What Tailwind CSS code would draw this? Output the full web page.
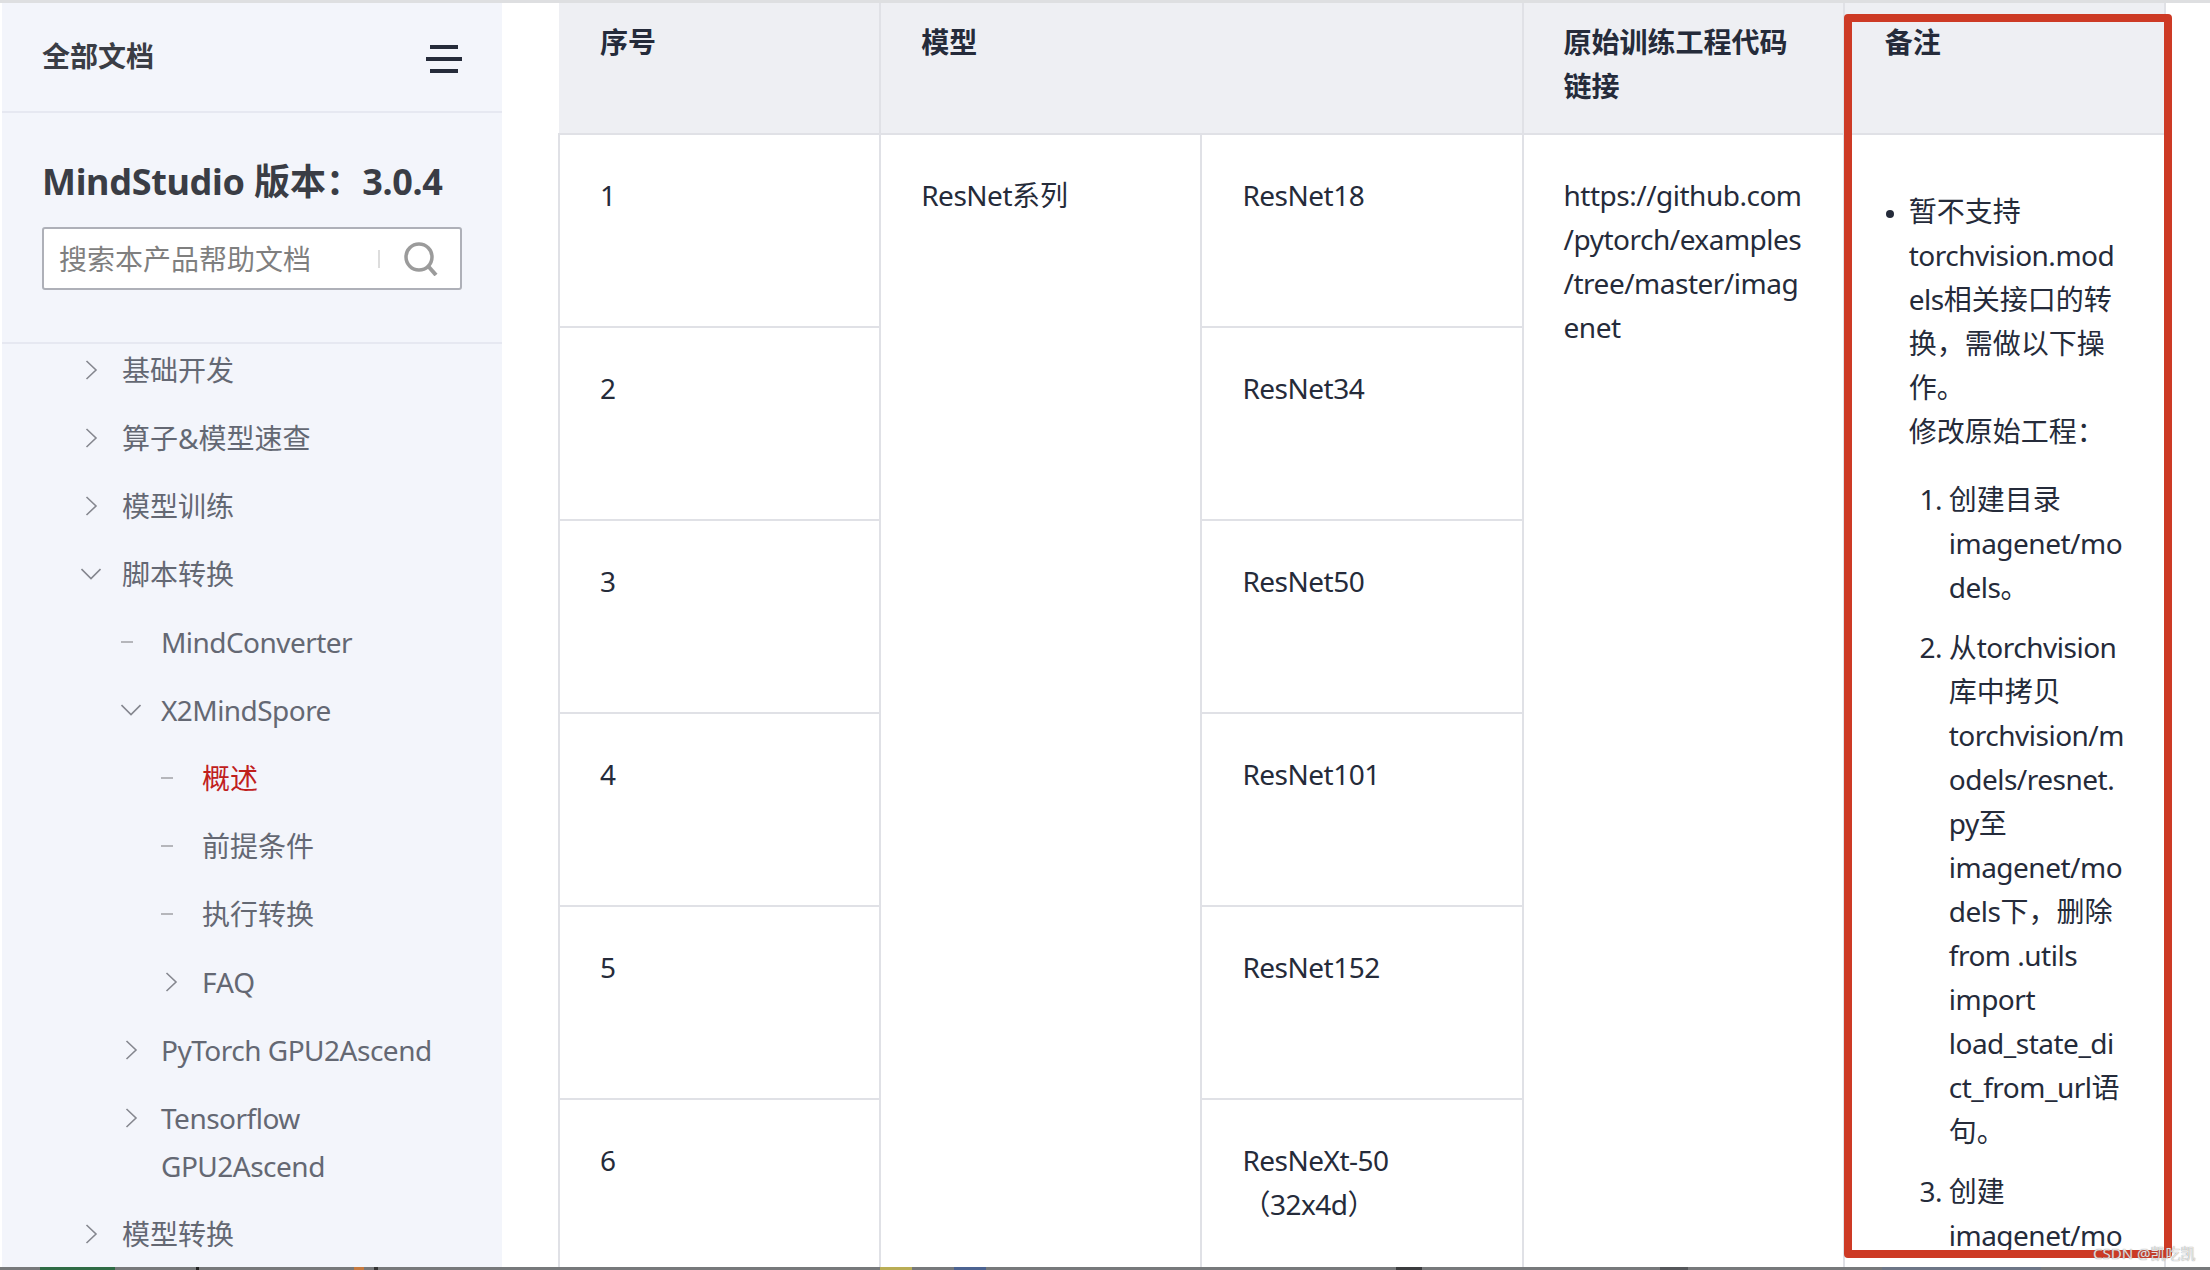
<!DOCTYPE html>
<html lang="zh-CN">
<head>
    <meta charset="UTF-8">
    <title>MindStudio 版本：3.0.4</title>
    <script src="https://cdn.jsdelivr.net/npm/@tailwindcss/browser@4"></script>
</head>
<body class="bg-white [font-family:'Noto_Sans','Noto_Sans_CJK_SC',sans-serif] text-[28px] leading-[44px] text-[#252b3a]">
    <svg class="hidden">
        <symbol id="chev-right" viewBox="0 0 20 20"><path d="M5.5 1 L15 10 L5.5 19" fill="none" stroke="#85878f" stroke-width="1.6"/></symbol>
        <symbol id="chev-down" viewBox="0 0 20 20"><path d="M0.5 5 L10 14.5 L19.5 5" fill="none" stroke="#85878f" stroke-width="1.6"/></symbol>
    </svg>

    <div class="relative flex h-[1270px] w-[2210px] flex-col overflow-hidden">
        <div class="h-[3px] shrink-0 bg-[#dedfe1]"></div>

        <div class="flex min-h-0 flex-1">
            <!-- sidebar -->
            <aside class="ml-[2px] w-[500px] shrink-0 bg-[#f3f5fb]">
                <div class="flex h-[110px] items-center justify-between border-b-2 border-[#e6e8f1] pr-[40px] pl-[40px]">
                    <span class="-mt-[2px] font-bold text-[#3a3d45]">全部文档</span>
                    <svg class="mt-[4px]" width="36" height="28" viewBox="0 0 36 28" fill="#252b3a"><rect x="4" y="0" width="28" height="4"/><rect x="0" y="12" width="36" height="4"/><rect x="4" y="24" width="28" height="4"/></svg>
                </div>
                <div class="h-[231px] border-b-2 border-[#e6e8f1] px-[40px] pt-[47px]">
                    <div class="text-[36px] leading-[44px] font-bold text-[#3a3d45]"><span class="tracking-[-0.3px]">MindStudio</span> 版本：<span class="tracking-[-0.3px]">3.0.4</span></div>
                    <div class="mt-[23px] flex h-[63px] w-[420px] items-center rounded-[3px] border-2 border-[#aeb0b8] bg-white pl-[15px]">
                        <span class="w-[319px] text-[#7f7f7f]">搜索本产品帮助文档</span>
                        <span class="h-[18px] w-[2px] bg-[#dddddd]"></span>
                        <svg class="ml-[24px]" width="34" height="34" viewBox="0 0 34 34" fill="none" stroke="#9b9b9b"><circle cx="15" cy="15" r="13" stroke-width="3.5"/><path d="M24 24 L32 33" stroke-width="4"/></svg>
                    </div>
                </div>
                <nav class="flex flex-col gap-[20px] pt-[2px] leading-[48px] text-[#646873]">
                    <div class="flex pl-[79px]"><span class="flex h-[48px] w-[41px] shrink-0 items-center"><svg width="20" height="20"><use href="#chev-right"/></svg></span>基础开发</div>
                    <div class="flex pl-[79px]"><span class="flex h-[48px] w-[41px] shrink-0 items-center"><svg width="20" height="20"><use href="#chev-right"/></svg></span>算子&amp;模型速查</div>
                    <div class="flex pl-[79px]"><span class="flex h-[48px] w-[41px] shrink-0 items-center"><svg width="20" height="20"><use href="#chev-right"/></svg></span>模型训练</div>
                    <div class="flex pl-[79px]"><span class="flex h-[48px] w-[41px] shrink-0 items-center"><svg width="20" height="20"><use href="#chev-down"/></svg></span>脚本转换</div>
                    <div class="flex pl-[119px] tracking-[-0.55px]"><span class="flex h-[48px] w-10 shrink-0 items-center"><span class="h-[2px] w-[12px] bg-[#b5b6bb]"></span></span>MindConverter</div>
                    <div class="flex pl-[119px] tracking-[-0.55px]"><span class="flex h-[48px] w-10 shrink-0 items-center"><svg width="20" height="20"><use href="#chev-down"/></svg></span>X2MindSpore</div>
                    <div class="flex pl-[159px]"><span class="flex h-[48px] w-[41px] shrink-0 items-center"><span class="h-[2px] w-[12px] bg-[#b5b6bb]"></span></span><span class="text-[#c0201c]">概述</span></div>
                    <div class="flex pl-[159px]"><span class="flex h-[48px] w-[41px] shrink-0 items-center"><span class="h-[2px] w-[12px] bg-[#b5b6bb]"></span></span>前提条件</div>
                    <div class="flex pl-[159px]"><span class="flex h-[48px] w-[41px] shrink-0 items-center"><span class="h-[2px] w-[12px] bg-[#b5b6bb]"></span></span>执行转换</div>
                    <div class="flex pl-[159px]"><span class="flex h-[48px] w-[41px] shrink-0 items-center"><svg width="20" height="20"><use href="#chev-right"/></svg></span>FAQ</div>
                    <div class="flex pl-[119px] tracking-[-0.5px]"><span class="flex h-[48px] w-10 shrink-0 items-center"><svg width="20" height="20"><use href="#chev-right"/></svg></span>PyTorch GPU2Ascend</div>
                    <div class="flex pl-[119px] tracking-[-0.5px]"><span class="flex h-[48px] w-10 shrink-0 items-center"><svg width="20" height="20"><use href="#chev-right"/></svg></span><span>Tensorflow<br>GPU2Ascend</span></div>
                    <div class="flex pl-[79px]"><span class="flex h-[48px] w-[41px] shrink-0 items-center"><svg width="20" height="20"><use href="#chev-right"/></svg></span>模型转换</div>
                </nav>
            </aside>

            <!-- table -->
            <main class="ml-[56px] min-w-0 flex-1 overflow-hidden">
                <table class="w-[1608px] table-fixed border-collapse">
                    <thead>
                        <tr class="h-[131px] bg-[#eeeff3] align-top">
                            <th class="border-2 border-t-0 border-l-0 border-[#e0e1e6] pt-[17px] pr-[40px] pl-[41px] text-left font-semibold">序号</th>
                            <th colspan="2" class="border-2 border-t-0 border-[#e0e1e6] px-[40px] pt-[17px] text-left font-semibold">模型</th>
                            <th class="border-2 border-t-0 border-[#e0e1e6] px-[40px] pt-[17px] text-left font-semibold whitespace-nowrap">原始训练工程代码<br>链接</th>
                            <th class="border-2 border-t-0 border-[#e0e1e6] px-[40px] pt-[17px] text-left font-semibold">备注</th>
                        </tr>
                    </thead>
                    <tbody class="align-top tracking-[-0.5px]">
                        <tr class="h-[193px]">
                            <td class="border-2 border-[#e0e1e6] px-[40px] pt-[38px]">1</td>
                            <td rowspan="6" class="border-2 border-[#e0e1e6] px-[40px] pt-[38px]">ResNet<span class="tracking-normal">系列</span></td>
                            <td class="border-2 border-[#e0e1e6] px-[40px] pt-[38px]">ResNet18</td>
                            <td rowspan="6" class="border-2 border-[#e0e1e6] px-[40px] pt-[38px] whitespace-nowrap">https://github.com<br>/pytorch/examples<br>/tree/master/imag<br>enet</td>
                            <td rowspan="6" class="border-2 border-[#e0e1e6] pt-[54px] pl-[41px] whitespace-nowrap">
                                <ul class="list-disc pl-[23px] marker:text-[22px]">
                                    <li><span class="tracking-normal">暂不支持</span><br>torchvision.mod<br>els<span class="tracking-normal">相关接口的转<br>换，需做以下操<br>作。<br>修改原始工程：</span>
                                        <ol class="mt-[24px] list-decimal pl-[40px] marker:text-[28px]">
                                            <li><span class="tracking-normal">创建目录</span><br>imagenet/mo<br>dels<span class="tracking-normal">。</span></li>
                                            <li class="mt-[16px]"><span class="tracking-normal">从</span>torchvision<br><span class="tracking-normal">库中拷贝</span><br>torchvision/m<br>odels/resnet.<br>py<span class="tracking-normal">至</span><br>imagenet/mo<br>dels<span class="tracking-normal">下，删除</span><br>from .utils<br>import<br>load_state_di<br>ct_from_url<span class="tracking-normal">语<br>句。</span></li>
                                            <li class="mt-[16px]"><span class="tracking-normal">创建</span><br>imagenet/mo</li>
                                        </ol>
                                    </li>
                                </ul>
                            </td>
                        </tr>
                        <tr class="h-[193px]">
                            <td class="border-2 border-[#e0e1e6] px-[40px] pt-[38px]">2</td>
                            <td class="border-2 border-[#e0e1e6] px-[40px] pt-[38px]">ResNet34</td>
                        </tr>
                        <tr class="h-[193px]">
                            <td class="border-2 border-[#e0e1e6] px-[40px] pt-[38px]">3</td>
                            <td class="border-2 border-[#e0e1e6] px-[40px] pt-[38px]">ResNet50</td>
                        </tr>
                        <tr class="h-[193px]">
                            <td class="border-2 border-[#e0e1e6] px-[40px] pt-[38px]">4</td>
                            <td class="border-2 border-[#e0e1e6] px-[40px] pt-[38px]">ResNet101</td>
                        </tr>
                        <tr class="h-[193px]">
                            <td class="border-2 border-[#e0e1e6] px-[40px] pt-[38px]">5</td>
                            <td class="border-2 border-[#e0e1e6] px-[40px] pt-[38px]">ResNet152</td>
                        </tr>
                        <tr class="h-[240px]">
                            <td class="border-2 border-[#e0e1e6] px-[40px] pt-[38px]">6</td>
                            <td class="border-2 border-[#e0e1e6] px-[40px] pt-[38px] whitespace-nowrap">ResNeXt-50<br>（32x4d）</td>
                        </tr>
                    </tbody>
                </table>
            </main>
        </div>

        <!-- sliver of the window below -->
        <div class="flex h-[3px] shrink-0 bg-[#77797b]">
            <span class="ml-[40px] w-[75px] bg-[#2f6b45]"></span>
            <span class="ml-[81px] w-[3px] bg-[#222222]"></span>
            <span class="ml-[155px] w-[10px] bg-[#c77a3f]"></span>
            <span class="ml-[10px] w-[4px] bg-[#333333]"></span>
            <span class="ml-[502px] w-[32px] bg-[#b9ad55]"></span>
            <span class="ml-[42px] w-[32px] bg-[#4c6391]"></span>
            <span class="ml-[410px] w-[26px] bg-[#3b3c3e]"></span>
            <span class="ml-[238px] w-[28px] bg-[#55575a]"></span>
            <span class="ml-[194px] w-[159px] bg-[#6d7687]"></span>
        </div>

        <!-- annotation over the last column -->
        <div class="absolute top-[14px] left-[1844px] h-[1244px] w-[328px] rounded-[4px] border-8 border-[#cd3a25]"></div>
        <div class="absolute top-[1241px] left-[2093px] text-[15px] leading-[24px] whitespace-nowrap text-white/80 [text-shadow:0_0_1px_#666]">CSDN @凯吃凯</div>
    </div>
</body>
</html>
